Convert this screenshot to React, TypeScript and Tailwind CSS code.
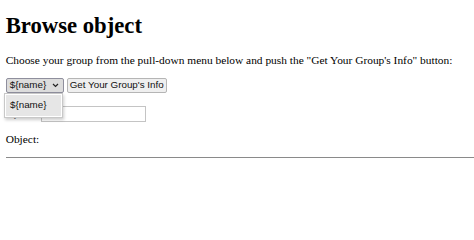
export default function App() {
  return (
    <div className="min-h-screen bg-white px-[5.7px] text-[11.4px] text-black" style={{ fontFamily: '"Liberation Serif", "Times New Roman", serif' }}>
      <h1 className="pt-[13px] text-[22.7px] font-bold leading-[26px]">Browse object</h1>
      <p className="mt-[15px] leading-[13px]">
        Choose your group from the pull-down menu below and push the "Get Your Group's Info" button:
      </p>
      <div className="relative mt-[11px] font-['Liberation_Sans',Arial,sans-serif] text-[9.8px]">
        <div className="flex items-center gap-[3px]">
          <div className="flex h-[15px] w-[58px] items-center justify-between rounded-[2px] border border-[#8f8f9d] bg-[#dcdcdc] pl-[3px] pr-[4px] text-[#111]">
            <span>{'${name}'}</span>
            <svg width="7" height="5" viewBox="0 0 7 5" fill="none">
              <path d="M1 1l2.5 2.5L6 1" stroke="#222" strokeWidth="1.2" />
            </svg>
          </div>
          <button className="flex h-[15px] w-[100px] items-center justify-center rounded-[2px] border border-[#b5b5b5] bg-[#efefef] text-[#111]">
            Get Your Group's Info
          </button>
        </div>
        <div className="mt-[12px] flex items-center gap-[2px]">
          <span className="w-[33px] font-['Liberation_Serif',serif] text-[11.4px]">{'${name}:'}</span>
          <div className="h-[16px] w-[105px] border border-[#c4c4c4] bg-white" />
        </div>
        {/* open dropdown list */}
        <div className="absolute left-[-1.7px] top-[15px] w-[59px] border border-[#c8c8c8] bg-white p-[1px] shadow-[1px_2px_3px_rgba(0,0,0,0.2)]">
          <div className="flex h-[21px] items-center bg-[#e6e6e6] pl-[4px] text-[#111]">{'${name}'}</div>
        </div>
      </div>
      <p className="mt-[11px] leading-[13px]">Object:</p>
      <hr className="mt-[11px] -mr-[5.7px] border-t border-[#8a8a8a]" />
    </div>
  );
}
